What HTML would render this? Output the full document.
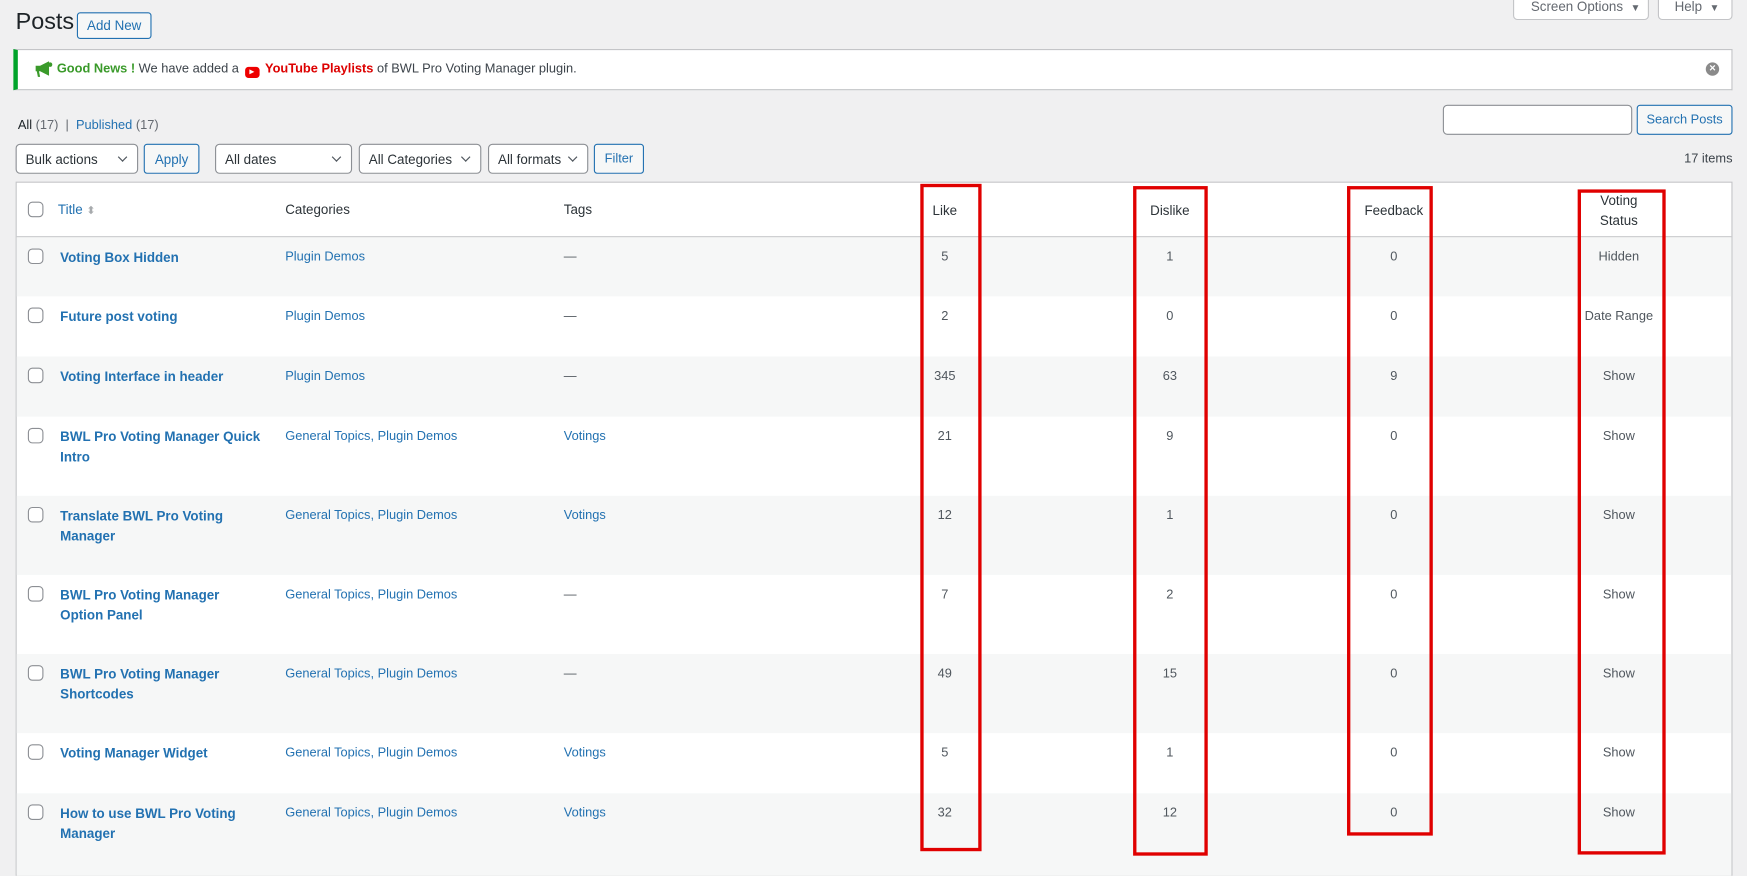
<!DOCTYPE html>
<html><head><meta charset="utf-8"><style>
body{margin:0;width:1747px;height:876px;overflow:hidden;background:#f0f0f1;font-family:"Liberation Sans",sans-serif;color:#3c434a}
#w{position:absolute;left:0;top:0;width:1568px;height:786px;transform:scale(1.11416);transform-origin:0 0;font-size:12px}
.a{position:absolute}
.btn{position:absolute;border:1px solid #2271b1;color:#2271b1;border-radius:3px;background:#f6f7f7;box-sizing:border-box;text-align:center;font-size:12px}
.sel{position:absolute;border:1px solid #8c8f94;border-radius:4px;background:#fff;box-sizing:border-box;font-size:12px;color:#2c3338;padding-left:8px}
.sel:after{content:"";position:absolute;right:10px;top:8px;width:5px;height:5px;border-right:1.3px solid #50575e;border-bottom:1.3px solid #50575e;transform:rotate(45deg)}
.row{position:absolute;left:15px;width:1539px}
.row .c{position:absolute;top:10px;left:10px;width:14px;height:14px;border:1px solid #8c8f94;border-radius:4px;background:#fff;box-sizing:border-box}
.t{position:absolute;left:39px;top:10px;width:180px;color:#2271b1;font-weight:bold;line-height:17.5px;font-size:12px}
.cat{position:absolute;left:241px;top:10px;color:#2271b1;font-size:11.5px;line-height:17px}
.tag{position:absolute;left:491px;top:10px;color:#2271b1;font-size:11.5px;line-height:17px}
.n{position:absolute;top:10px;width:100px;text-align:center;font-size:11.5px;line-height:17px;color:#50575e}
.rb{position:absolute;border:3px solid #e00000;box-sizing:border-box}
</style></head><body><div id="w">
<div class="a" style="left:14px;top:8px;font-size:21px;color:#1d2327">Posts</div>
<div class="btn" style="left:69px;top:11px;width:67px;height:24px;line-height:22px">Add New</div>
<div class="a" style="left:1358px;top:-6px;width:122px;height:24px;background:#fff;border:1px solid #c3c4c7;border-radius:0 0 4px 4px;box-sizing:border-box;font-size:12px;color:#646970;line-height:22px;padding-left:15px">Screen Options &nbsp;<span style="font-size:9px">▼</span></div>
<div class="a" style="left:1488px;top:-6px;width:67px;height:24px;background:#fff;border:1px solid #c3c4c7;border-radius:0 0 4px 4px;box-sizing:border-box;font-size:12px;color:#646970;line-height:22px;padding-left:14px">Help &nbsp;<span style="font-size:9px">▼</span></div>
<div class="a" style="left:12px;top:44px;width:1543px;height:37px;background:#fff;border:1px solid #c3c4c7;border-left:4px solid #00a32a;box-sizing:border-box"></div>
<svg class="a" style="left:30px;top:54px" width="17" height="16" viewBox="0 0 17 16"><path d="M2 5h4l8-4v13l-8-4H5l1 5H4L3 10H2z" fill="#3a9a2a"/><circle cx="15" cy="4" r="2" fill="#3a9a2a"/></svg>
<div class="a" style="left:51px;top:56px;font-size:11.5px;color:#3c434a"><b style="color:#3a9a2a">Good News !</b> We have added a <span style="display:inline-block;width:13px;height:10px;background:#e00;border-radius:3px;vertical-align:-1px;margin:0 2px;color:#fff;font-size:6px;line-height:10px;text-align:center">▶</span> <b style="color:#d00">YouTube Playlists</b> of BWL Pro Voting Manager plugin.</div>
<div class="a" style="left:1531px;top:56px;width:12px;height:12px;border-radius:50%;background:#8a8a8a;color:#fff;font-size:10px;line-height:12px;text-align:center;font-weight:bold">×</div>
<div class="a" style="left:16px;top:107px;font-size:11.5px;color:#646970"><span style="color:#1d2327">All</span> (17) &nbsp;| &nbsp;<span style="color:#2271b1">Published</span> (17)</div>
<div class="a" style="left:1295px;top:94px;width:170px;height:27px;border:1px solid #8c8f94;border-radius:4px;background:#fff;box-sizing:border-box"></div>
<div class="btn" style="left:1469px;top:94px;width:86px;height:27px;line-height:26px;font-size:11.5px">Search Posts</div>
<div class="sel" style="left:14px;top:129px;width:110px;height:27px;line-height:26px">Bulk actions</div>
<div class="btn" style="left:129px;top:129px;width:50px;height:27px;line-height:27px">Apply</div>
<div class="sel" style="left:193px;top:129px;width:123px;height:27px;line-height:26px">All dates</div>
<div class="sel" style="left:322px;top:129px;width:110px;height:27px;line-height:26px">All Categories</div>
<div class="sel" style="left:438px;top:129px;width:90px;height:27px;line-height:26px">All formats</div>
<div class="btn" style="left:533px;top:129px;width:45px;height:27px;line-height:27px;font-size:11.5px">Filter</div>
<div class="a" style="right:13px;top:137px;font-size:11.5px;color:#3c434a">17 items</div>
<div class="a" style="left:14px;top:163px;width:1541px;height:623px;background:#fff;border:1px solid #c3c4c7;box-sizing:border-box"></div>
<div class="row" style="top:164px;height:48px;border-bottom:1px solid #c3c4c7;color:#2c3338;font-size:12px">
<div class="c" style="top:17px"></div>
<div class="a" style="left:37px;top:17px;color:#2271b1">Title <span style="color:#a7aaad;font-size:10px">⬍</span></div>
<div class="a" style="left:241px;top:17px">Categories</div>
<div class="a" style="left:491px;top:17px">Tags</div>
<div class="n" style="left:783px;top:17px;font-size:12px;color:#2c3338">Like</div>
<div class="n" style="left:985px;top:17px;font-size:12px;color:#2c3338">Dislike</div>
<div class="n" style="left:1186px;top:17px;font-size:12px;color:#2c3338">Feedback</div>
<div class="n" style="left:1388px;top:7px;line-height:18px;font-size:12px;color:#2c3338">Voting<br>Status</div>
</div>
<div class="row" style="top:213px;height:53px;background:#f6f7f7"><div class="c"></div><div class="t">Voting Box Hidden</div><div class="cat">Plugin Demos</div><div class="tag" style="color:#50575e">—</div><div class="n" style="left:783px">5</div><div class="n" style="left:985px">1</div><div class="n" style="left:1186px">0</div><div class="n" style="left:1388px">Hidden</div></div>
<div class="row" style="top:266px;height:54px"><div class="c"></div><div class="t">Future post voting</div><div class="cat">Plugin Demos</div><div class="tag" style="color:#50575e">—</div><div class="n" style="left:783px">2</div><div class="n" style="left:985px">0</div><div class="n" style="left:1186px">0</div><div class="n" style="left:1388px">Date Range</div></div>
<div class="row" style="top:320px;height:54px;background:#f6f7f7"><div class="c"></div><div class="t">Voting Interface in header</div><div class="cat">Plugin Demos</div><div class="tag" style="color:#50575e">—</div><div class="n" style="left:783px">345</div><div class="n" style="left:985px">63</div><div class="n" style="left:1186px">9</div><div class="n" style="left:1388px">Show</div></div>
<div class="row" style="top:374px;height:71px"><div class="c"></div><div class="t">BWL Pro Voting Manager Quick Intro</div><div class="cat">General Topics, Plugin Demos</div><div class="tag">Votings</div><div class="n" style="left:783px">21</div><div class="n" style="left:985px">9</div><div class="n" style="left:1186px">0</div><div class="n" style="left:1388px">Show</div></div>
<div class="row" style="top:445px;height:71px;background:#f6f7f7"><div class="c"></div><div class="t">Translate BWL Pro Voting Manager</div><div class="cat">General Topics, Plugin Demos</div><div class="tag">Votings</div><div class="n" style="left:783px">12</div><div class="n" style="left:985px">1</div><div class="n" style="left:1186px">0</div><div class="n" style="left:1388px">Show</div></div>
<div class="row" style="top:516px;height:71px"><div class="c"></div><div class="t">BWL Pro Voting Manager Option Panel</div><div class="cat">General Topics, Plugin Demos</div><div class="tag" style="color:#50575e">—</div><div class="n" style="left:783px">7</div><div class="n" style="left:985px">2</div><div class="n" style="left:1186px">0</div><div class="n" style="left:1388px">Show</div></div>
<div class="row" style="top:587px;height:71px;background:#f6f7f7"><div class="c"></div><div class="t">BWL Pro Voting Manager Shortcodes</div><div class="cat">General Topics, Plugin Demos</div><div class="tag" style="color:#50575e">—</div><div class="n" style="left:783px">49</div><div class="n" style="left:985px">15</div><div class="n" style="left:1186px">0</div><div class="n" style="left:1388px">Show</div></div>
<div class="row" style="top:658px;height:54px"><div class="c"></div><div class="t">Voting Manager Widget</div><div class="cat">General Topics, Plugin Demos</div><div class="tag">Votings</div><div class="n" style="left:783px">5</div><div class="n" style="left:985px">1</div><div class="n" style="left:1186px">0</div><div class="n" style="left:1388px">Show</div></div>
<div class="row" style="top:712px;height:74px;background:#f6f7f7"><div class="c"></div><div class="t">How to use BWL Pro Voting Manager</div><div class="cat">General Topics, Plugin Demos</div><div class="tag">Votings</div><div class="n" style="left:783px">32</div><div class="n" style="left:985px">12</div><div class="n" style="left:1186px">0</div><div class="n" style="left:1388px">Show</div></div>
<div class="rb" style="left:826px;top:165px;width:55px;height:599px"></div>
<div class="rb" style="left:1017px;top:167px;width:67px;height:601px"></div>
<div class="rb" style="left:1209px;top:167px;width:77px;height:583px"></div>
<div class="rb" style="left:1416px;top:170px;width:79px;height:597px"></div>
</div></body></html>
